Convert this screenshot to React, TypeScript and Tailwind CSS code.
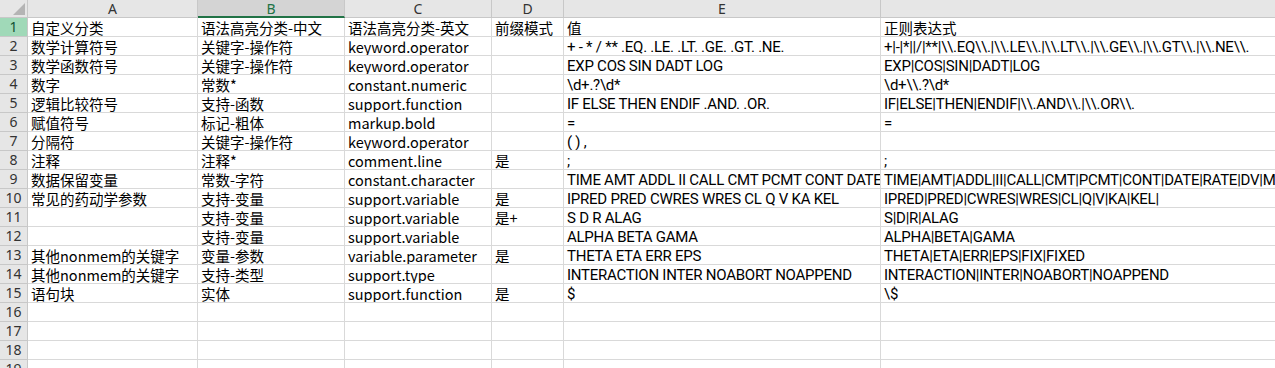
import React from "react";

const rows: string[][] = [
  ["自定义分类", "语法高亮分类-中文", "语法高亮分类-英文", "前缀模式", "值", "正则表达式"],
  ["数学计算符号", "关键字-操作符", "keyword.operator", "", "+ - * / ** .EQ. .LE. .LT. .GE. .GT. .NE.", "+|-|*||/|**|\\\\.EQ\\\\.|\\\\.LE\\\\.|\\\\.LT\\\\.|\\\\.GE\\\\.|\\\\.GT\\\\.|\\\\.NE\\\\."],
  ["数学函数符号", "关键字-操作符", "keyword.operator", "", "EXP COS SIN DADT LOG", "EXP|COS|SIN|DADT|LOG"],
  ["数字", "常数*", "constant.numeric", "", "\\d+.?\\d*", "\\d+\\\\.?\\d*"],
  ["逻辑比较符号", "支持-函数", "support.function", "", "IF ELSE THEN ENDIF .AND. .OR.", "IF|ELSE|THEN|ENDIF|\\\\.AND\\\\.|\\\\.OR\\\\."],
  ["赋值符号", "标记-粗体", "markup.bold", "", "=", "="],
  ["分隔符", "关键字-操作符", "keyword.operator", "", "( ) ,", ""],
  ["注释", "注释*", "comment.line", "是", ";", ";"],
  ["数据保留变量", "常数-字符", "constant.character", "", "TIME AMT ADDL II CALL CMT PCMT CONT DATE RATE DV MDV", "TIME|AMT|ADDL|II|CALL|CMT|PCMT|CONT|DATE|RATE|DV|MDV|EVID|SS"],
  ["常见的药动学参数", "支持-变量", "support.variable", "是", "IPRED PRED CWRES WRES CL Q V KA KEL", "IPRED|PRED|CWRES|WRES|CL|Q|V|KA|KEL|"],
  ["", "支持-变量", "support.variable", "是+", "S D R ALAG", "S|D|R|ALAG"],
  ["", "支持-变量", "support.variable", "", "ALPHA BETA GAMA", "ALPHA|BETA|GAMA"],
  ["其他nonmem的关键字", "变量-参数", "variable.parameter", "是", "THETA ETA ERR EPS", "THETA|ETA|ERR|EPS|FIX|FIXED"],
  ["其他nonmem的关键字", "支持-类型", "support.type", "", "INTERACTION INTER NOABORT NOAPPEND", "INTERACTION|INTER|NOABORT|NOAPPEND"],
  ["语句块", "实体", "support.function", "是", "$", "\\$"],
  ["", "", "", "", "", ""],
  ["", "", "", "", "", ""],
  ["", "", "", "", "", ""],
  ["", "", "", "", "", ""],
];

const cjk = "font-['Noto_Sans_CJK_SC','Noto_Sans',sans-serif] text-[14.5px]";
const narrow = "font-['Roboto','Noto_Sans_CJK_SC',sans-serif] text-[15px] tracking-[-0.25px]";
const colHead =
  "h-[18px] bg-[#e6e6e6] border-r border-b border-[#c8c8c8] flex items-center justify-center text-[14px] text-[#333] font-['Noto_Sans',sans-serif] leading-[16px]";

export default function App() {
  return (
    <div className="w-[1275px] h-[368px] overflow-hidden bg-white text-black">
      <div className="grid grid-cols-[28px_170px_147px_147px_72px_317px_420px]">
        <div className="relative h-[18px] bg-[#e6e6e6] border-r border-b border-[#c8c8c8]">
          <svg className="absolute right-[2px] bottom-[2px]" width="12" height="12" viewBox="0 0 12 12">
            <polygon points="12,0 12,12 0,12" fill="#b4b4b4" />
          </svg>
        </div>
        <div className={colHead}>A</div>
        <div className="h-[18px] bg-[#d4d4d4] border-r border-b-2 border-r-[#c8c8c8] border-b-[#217346] flex items-center justify-center text-[14px] text-[#217346] font-['Noto_Sans',sans-serif] leading-[15px]">B</div>
        <div className={colHead}>C</div>
        <div className={colHead}>D</div>
        <div className={colHead}>E</div>
        <div className="h-[18px] bg-[#e6e6e6] border-b border-[#c8c8c8]"></div>

        {rows.map((r, i) => (
          <React.Fragment key={i}>
            <div
              className={
                "h-[19px] border-r border-b border-[#c8c8c8] flex items-center justify-center text-[14px] leading-[18px] font-['Noto_Sans',sans-serif] " +
                (i === 0 ? "bg-[#a0d9b8] text-[#0f5132]" : "bg-[#e6e6e6] text-[#333]")
              }
            >
              {i + 1}
            </div>
            {r.map((c, j) => (
              <div
                key={j}
                className={
                  "h-[19px] border-b border-[#d9d9d9] px-[3px] pt-[1px] overflow-hidden whitespace-nowrap leading-[18px] " +
                  (j < 5 ? "border-r " : "") +
                  (j >= 4 && i > 0 ? narrow : cjk)
                }
              >
                {c}
              </div>
            ))}
          </React.Fragment>
        ))}
      </div>
    </div>
  );
}
